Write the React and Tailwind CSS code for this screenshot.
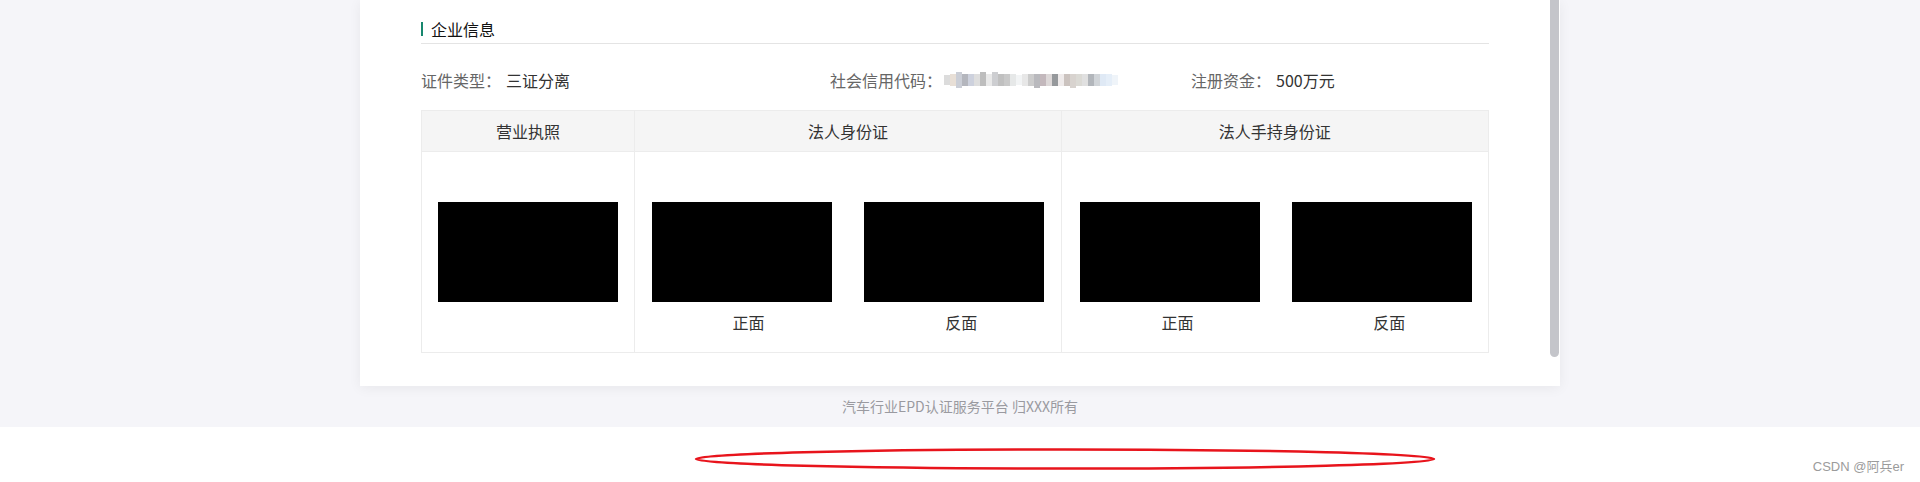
import React from 'react';

// blurred credit code, drawn as a strip of mosaic blocks
const mosaic = [
  'h-[10px] bg-[#dcdcdc]',
  'h-[12px] bg-[#e8dfd6]',
  'h-[16px] self-start bg-[#cbced6]',
  'h-[12px] bg-[#b4b6bd]',
  'h-[12px] bg-[#cdd1dd]',
  'h-[12px] bg-[#dedede]',
  'h-[14px] self-start bg-[#bdbdbd]',
  'h-[12px] bg-[#e9e9e9]',
  'h-[14px] self-start bg-[#cdced1]',
  'h-[12px] bg-[#c0c0c0]',
  'h-[12px] bg-[#c9c9c9]',
  'h-[12px] bg-[#e6e8e8]',
  'h-[10px] bg-[#f2f4f5]',
  'h-[12px] bg-[#e7e7e7]',
  'h-[12px] bg-[#cccccc]',
  'h-[14px] self-end bg-[#b9b9bd]',
  'h-[12px] bg-[#c3b8bc]',
  'h-[12px] bg-[#ddd8d8]',
  'h-[12px] bg-[#96999c]',
  'h-[12px] bg-[#efebeb]',
  'h-[12px] bg-[#cbc3bf]',
  'h-[14px] self-end bg-[#d8d3cf]',
  'h-[12px] bg-[#dbdad5]',
  'h-[12px] bg-[#e0e0e0]',
  'h-[12px] bg-[#b2b6bb]',
  'h-[12px] bg-[#d0d4d8]',
  'h-[12px] bg-[#dfe9f5]',
  'h-[12px] bg-[#e5eef8]',
  'h-[10px] bg-[#eff4f9]',
];

function Photo({ label }) {
  return (
    <div className="flex-1 pt-[50px] flex flex-col items-center">
      <div className="w-[180px] h-[100px] bg-black" />
      {label && <div className="mt-[10px] pl-[14px] leading-[20px] text-[16px] text-[#333]">{label}</div>}
    </div>
  );
}

export default function App() {
  return (
    <div className="w-[1920px] h-[482px] overflow-hidden bg-white font-['Noto_Sans_CJK_SC',sans-serif]">
      <div className="bg-[#f5f5f9]">
        <div className="mx-auto w-[1200px] flex bg-white shadow-[0_2px_12px_rgba(0,0,0,0.06)]">
          <div className="flex-1 px-[61px] pb-[33px]">
            {/* section title */}
            <div className="pt-[18px] pb-[3px] border-b border-[#e4e4e4] flex items-center">
              <span className="w-[2px] h-[14px] bg-[#17876e] mr-[8px]" />
              <span className="text-[16px] leading-[22px] text-[#111]">企业信息</span>
            </div>

            {/* info row */}
            <div className="flex pt-[24px] pb-[18px] text-[16px] leading-[24px]">
              <div className="w-[409px] flex">
                <span className="text-[#666]">证件类型：</span>
                <span className="ml-[5px] text-[#333]">三证分离</span>
              </div>
              <div className="w-[361px] flex items-center">
                <span className="text-[#666]">社会信用代码：</span>
                <div className="ml-[2px] h-[16px] flex items-center">
                  {mosaic.map((c, i) => (
                    <div key={i} className={'w-[6px] ' + c} />
                  ))}
                </div>
              </div>
              <div className="flex">
                <span className="text-[#666]">注册资金：</span>
                <span className="ml-[5px] text-[#333]">500万元</span>
              </div>
            </div>

            {/* documents table */}
            <div className="border border-[#ececec]">
              <div className="grid grid-cols-5 h-[41px] bg-[#f5f5f5] border-b border-[#ececec] text-[16px] text-[#333]">
                <div className="col-span-1 border-r border-[#ececec] flex items-center justify-center">营业执照</div>
                <div className="col-span-2 border-r border-[#ececec] flex items-center justify-center">法人身份证</div>
                <div className="col-span-2 flex items-center justify-center">法人手持身份证</div>
              </div>
              <div className="grid grid-cols-5 h-[200px]">
                <div className="col-span-1 border-r border-[#ececec] flex">
                  <Photo />
                </div>
                <div className="col-span-2 border-r border-[#ececec] flex">
                  <Photo label="正面" />
                  <Photo label="反面" />
                </div>
                <div className="col-span-2 flex pl-[3px]">
                  <Photo label="正面" />
                  <Photo label="反面" />
                </div>
              </div>
            </div>
          </div>
          {/* scrollbar */}
          <div className="w-[10px] pr-[1px]">
            <div className="w-[9px] h-[357px] bg-[#c4c5ca] rounded-b-[5px]" />
          </div>
        </div>
        <div className="h-[41px] flex items-center justify-center text-[14px] text-[#9a9aa0]">
          汽车行业EPD认证服务平台 归XXX所有
        </div>
      </div>

      <div className="relative h-[55px]">
        <svg className="absolute left-[694px] top-[21px]" width="742" height="22" viewBox="0 0 742 22">
          <ellipse cx="371" cy="11" rx="369" ry="9.5" fill="none" stroke="#e8141c" strokeWidth="2.5" />
        </svg>
        <div className="flex justify-end pt-[32px] pr-[16px] text-[13px] leading-[16px] text-[#9b9b9b] font-['Liberation_Sans','Noto_Sans_CJK_SC',sans-serif]">
          CSDN @阿兵er
        </div>
      </div>
    </div>
  );
}
